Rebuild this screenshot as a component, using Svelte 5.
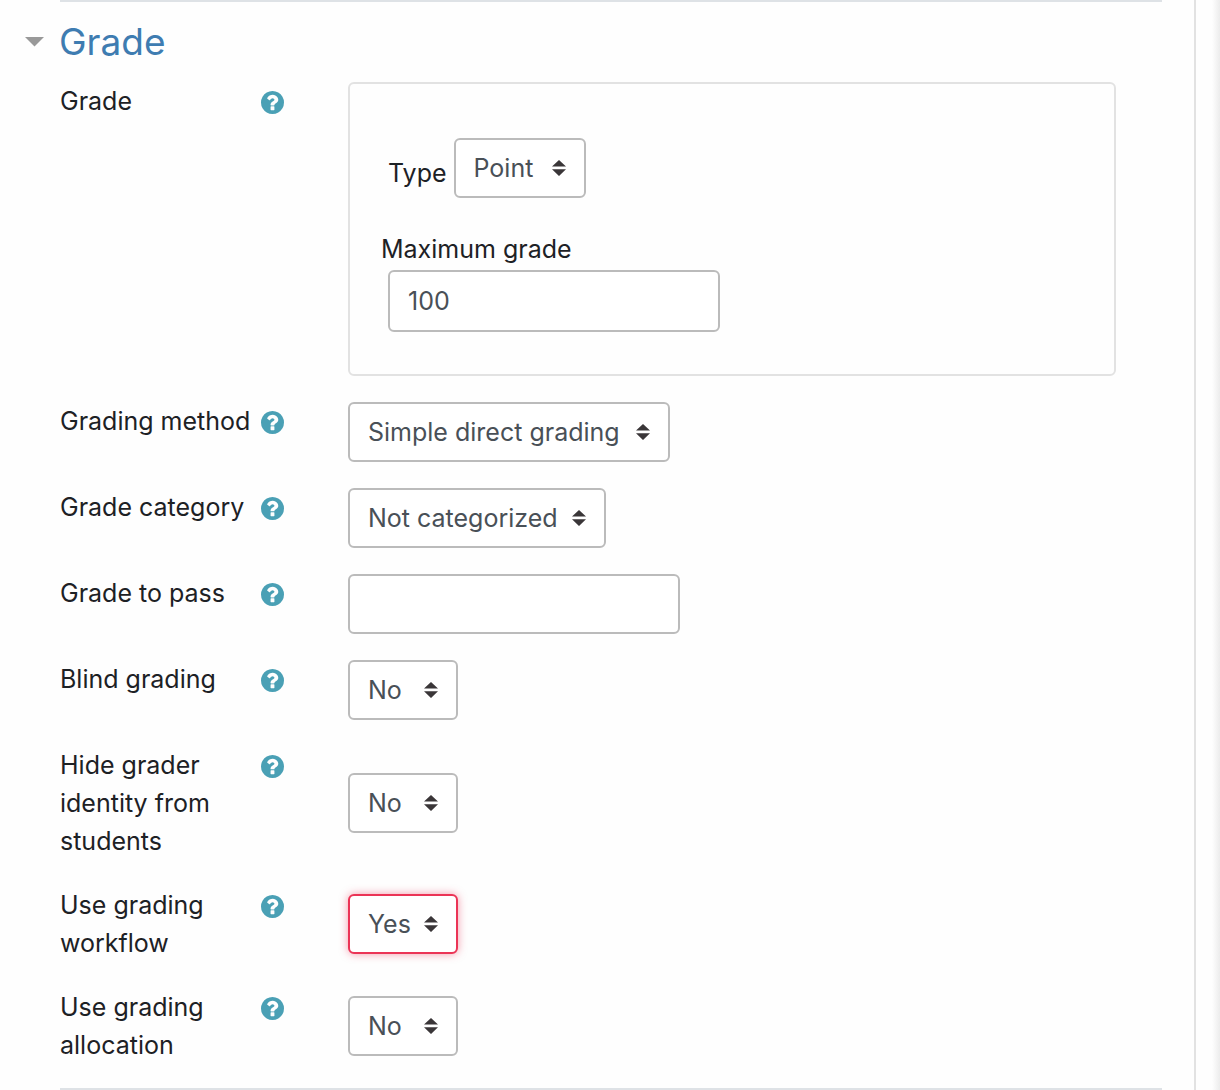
<script>
  let open = $state(true);

  const rows = [
    { id: 'method', label: 'Grading method', size: 'xl', options: ['Simple direct grading', 'Marking guide', 'Rubric'] },
    { id: 'category', label: 'Grade category', size: 'lg', options: ['Not categorized'] },
    { id: 'pass', label: 'Grade to pass' },
    { id: 'blind', label: 'Blind grading', size: 'sm', options: ['No', 'Yes'] },
    { id: 'hide', label: 'Hide grader identity from students', size: 'sm', options: ['No', 'Yes'] },
    { id: 'workflow', label: 'Use grading workflow', size: 'sm', options: ['Yes', 'No'], active: true },
    { id: 'allocation', label: 'Use grading allocation', size: 'sm', options: ['No', 'Yes'] }
  ];
</script>

{#snippet help(topic)}
  <button class="help" type="button" aria-label={`Help with ${topic}`}>
    <svg viewBox="128 128 1536 1536" aria-hidden="true">
      <path fill="#4aa0b5" d="M1024 1376v-192q0-14-9-23t-23-9h-192q-14 0-23 9t-9 23v192q0 14 9 23t23 9h192q14 0 23-9t9-23zm256-672q0-88-55.500-163t-138.500-116-170-41q-243 0-371 213-15 24 8 42l132 100q7 6 19 6 16 0 25-12 53-68 86-92 34-24 86-24 48 0 85.500 26t37.500 59q0 38-20 61t-68 45q-63 28-115.500 86.500t-52.500 125.500v36q0 14 9 23t23 9h192q14 0 23-9t9-23q0-19 21.500-49.500t54.500-49.500q32-18 49-28.500t46-35 44.500-48 28-60.500 12.500-81zm384 192q0 209-103 385.500t-279.500 279.500-385.500 103-385.500-103-279.500-279.500-103-385.500 103-385.500 279.500-279.500 385.500-103 385.500 103 279.500 279.500 103 385.500z" />
    </svg>
  </button>
{/snippet}

{#snippet picker(id, size, options, active)}
  <span class="picker {size}" class:active>
    <select {id}>
      {#each options as option}
        <option>{option}</option>
      {/each}
    </select>
    <svg viewBox="0 0 14 16" aria-hidden="true">
      <path d="M0 6.6 7 0l7 6.600zM0 9.200h14L7 16z" fill="#3a3638" />
    </svg>
  </span>
{/snippet}

<div class="page">
  <main>
    <section>
      <h2>
        <button class="toggle" type="button" aria-expanded={open} onclick={() => (open = !open)}>
          <svg class:closed={!open} viewBox="0 0 20 10" aria-hidden="true"><path d="M1 0h19L10.500 9.500z" fill="#999" /></svg>
          Grade
        </button>
      </h2>
      {#if open}
        <div class="rows">
          <div class="row">
            <div class="label"><span id="grade-label">Grade</span>{@render help('Grade')}</div>
            <fieldset aria-labelledby="grade-label">
              <div class="type">
                <label for="type">Type</label>
                {@render picker('type', 'md', ['Point', 'Scale', 'None'], false)}
              </div>
              <div class="maximum">
                <label for="maximum">Maximum grade</label>
                <input id="maximum" type="text" value="100" />
              </div>
            </fieldset>
          </div>
          {#each rows as row}
            <div class="row">
              <div class="label"><label for={row.id}>{row.label}</label>{@render help(row.label)}</div>
              <div class="control">
                {#if row.options}
                  {@render picker(row.id, row.size, row.options, row.active)}
                {:else}
                  <input id={row.id} type="text" />
                {/if}
              </div>
            </div>
          {/each}
        </div>
      {/if}
    </section>
  </main>
</div>

<style>
  :global(body) {
    margin: 0;
    background: #fefefe;
  }
  .page {
    padding-right: 24px;
    background: linear-gradient(to left, #ececec, #fefefe 8px);
    color: #1d2125;
    font: 25px/38px Inter, "Liberation Sans", sans-serif;
  }
  main {
    padding: 0 32px 0 24px;
    border-right: 2px solid #e2e2e2;
    background: #fefefe;
  }
  section {
    margin-left: 36px;
    border-top: 2px solid #dee2e6;
    border-bottom: 2px solid #dee2e6;
  }
  h2 {
    margin: 0 0 0 -36px;
    padding: 16px 0;
    font-size: 37px;
    font-weight: 400;
    line-height: 48px;
  }
  button {
    padding: 0;
    border: 0;
    background: none;
    font: inherit;
    cursor: pointer;
  }
  .toggle {
    display: flex;
    align-items: center;
    gap: 15px;
    color: #3e7cb1;
  }
  .toggle svg {
    width: 20px;
    height: 10px;
  }
  .toggle svg.closed {
    transform: rotate(-90deg);
  }
  .rows {
    display: flex;
    flex-direction: column;
    gap: 26px;
    padding: 0 46px 24px 0;
  }
  .row {
    display: grid;
    grid-template-columns: 224px 1fr;
    column-gap: 64px;
  }
  .label {
    display: grid;
    grid-template-columns: 1fr 23px;
    align-items: start;
  }
  .label span,
  .label label {
    margin-right: -4px;
  }
  .help {
    height: 38px;
    padding-top: 3px;
    line-height: 0;
  }
  .help svg {
    width: 23px;
    height: 23px;
  }
  .control {
    align-self: center;
    display: flex;
  }
  fieldset {
    display: grid;
    gap: 32px;
    min-width: 0;
    margin: 0;
    padding: 54px 31px 42px;
    border: 2px solid #e2e2e2;
    border-radius: 6px;
  }
  .type {
    display: flex;
    align-items: end;
    gap: 7px;
    padding-left: 7px;
  }
  .type label {
    padding-bottom: 6px;
  }
  .maximum {
    display: grid;
    gap: 2px;
  }
  .maximum input {
    height: 62px;
    margin-left: 7px;
  }
  input,
  select {
    box-sizing: border-box;
    height: 60px;
    margin: 0;
    padding: 0 18px;
    border: 2px solid #bbb;
    border-radius: 6px;
    background: #fff;
    color: #495057;
    font: inherit;
  }
  input {
    width: 332px;
    max-width: 100%;
  }
  select {
    width: 100%;
    appearance: none;
  }
  .picker {
    position: relative;
    display: block;
  }
  .picker svg {
    position: absolute;
    top: 22px;
    right: 20px;
    width: 14px;
    height: 16px;
    pointer-events: none;
  }
  .sm { width: 110px; }
  .md { width: 132px; }
  .lg { width: 258px; }
  .xl { width: 322px; }
  .active select {
    border-color: #eb3456;
    box-shadow: 0 0 8px #eb345680;
  }
</style>
